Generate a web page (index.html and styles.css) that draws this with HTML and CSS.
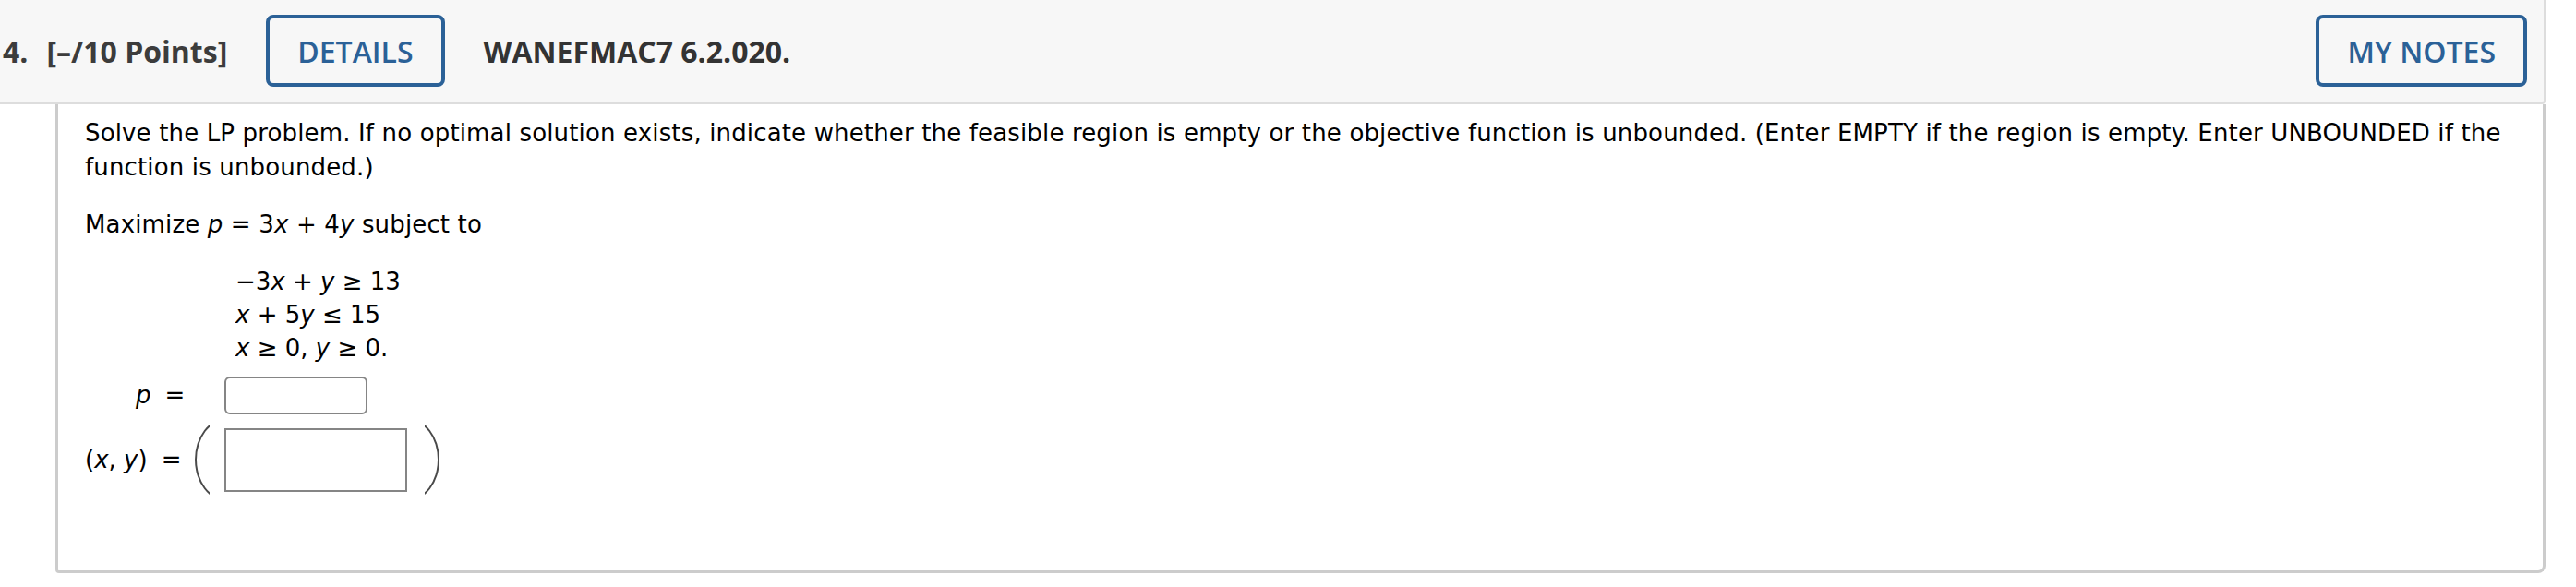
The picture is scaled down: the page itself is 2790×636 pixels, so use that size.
FILE: index.html
```html
<!DOCTYPE html>
<html>

<head>
	<meta charset="UTF-8">
	<link rel="stylesheet" href="styles.css">
</head>

<body>
	<div class="question">
		<!-- 题目头部 -->
		<div class="question-header">
			<span class="question-num">4.</span>
			<span class="question-points">[–/10 Points]</span>
			<button class="header-button">DETAILS</button>
			<span class="question-code">WANEFMAC7 6.2.020.</span>
			<button class="header-button notes-button">MY NOTES</button>
		</div>

		<!-- 题目内容 -->
		<div class="question-body">
			<p class="intro">Solve the LP problem. If no optimal solution exists, indicate whether the feasible region is empty or the objective function is unbounded. (Enter EMPTY if the region is empty. Enter UNBOUNDED if the function is unbounded.)</p>
			<p class="intro">Maximize <i>p</i> = 3<i>x</i> + 4<i>y</i> subject to</p>

			<div class="constraints">
				<div>−3<i>x</i> + <i>y</i> ≥ 13</div>
				<div><i>x</i> + 5<i>y</i> ≤ 15</div>
				<div><i>x</i> ≥ 0, <i>y</i> ≥ 0.</div>
			</div>

			<div class="answer-row">
				<div class="answer-label label-p"><i>p</i><span class="eq">=</span></div>
				<input type="text" class="answer-input input-p">
			</div>
			<div class="answer-row">
				<div class="answer-label">(<i>x</i>, <i>y</i>)<span class="eq">=</span></div>
				<div class="paren"></div>
				<input type="text" class="answer-input input-xy">
				<div class="paren paren-right"></div>
			</div>
		</div>
	</div>
</body>

</html>
```

FILE: styles.css
```css
		html,
		body {
			margin: 0;
			padding: 0;
			background: #ffffff;
		}

		.question {
			margin-right: 33px;
		}

		/* 头部 */
		.question-header {
			display: flex;
			align-items: center;
			height: 110px;
			padding: 0 18px 0 3px;
			background: #f7f7f7;
			border-right: 2px solid #dddddd;
			border-bottom: 3px solid #dddddd;
			border-bottom-right-radius: 4px;
			font-family: "Open Sans", "Liberation Sans", sans-serif;
			font-size: 32px;
		}

		.question-num,
		.question-points {
			font-weight: 700;
			color: #3c3c3c;
		}

		.question-points {
			margin-left: 20px;
		}

		.question-code {
			font-weight: 700;
			color: #333333;
			margin-left: 42px;
		}

		.header-button {
			box-sizing: border-box;
			height: 78px;
			margin-left: 42px;
			padding: 0 30px;
			background: transparent;
			border: 4px solid #2b6197;
			border-radius: 8px;
			color: #2b6197;
			font-family: "Open Sans", "Liberation Sans", sans-serif;
			font-size: 32px;
			font-weight: 600;
			cursor: pointer;
		}

		.notes-button {
			margin-left: auto;
		}

		/* 内容 */
		.question-body {
			margin-left: 60px;
			padding: 13px 14px 82px 29px;
			border: 3px solid #cccccc;
			border-top: none;
			border-radius: 0 0 8px 4px;
			font-family: "DejaVu Sans", Verdana, sans-serif;
			font-size: 26px;
			line-height: 37px;
			color: #000000;
		}

		.intro {
			margin: 0 0 25px;
			letter-spacing: 0.15px;
		}

		.constraints {
			margin-left: 163px;
			line-height: 36px;
		}

		.answer-row {
			display: flex;
			align-items: center;
		}

		.answer-row + .answer-row {
			margin-top: 11px;
		}

		.constraints + .answer-row {
			margin-top: 13px;
		}

		.answer-label {
			box-sizing: border-box;
			width: 108px;
		}

		.label-p {
			padding-left: 55px;
		}

		.eq {
			margin-left: 15px;
		}

		.answer-input {
			box-sizing: border-box;
			margin: 0;
			padding: 0 8px;
			border: 2px solid #858585;
			background: #ffffff;
			font-family: "DejaVu Sans", sans-serif;
			font-size: 26px;
		}

		.input-p {
			width: 155px;
			height: 41px;
			margin-left: 43px;
			border-radius: 6px;
		}

		.input-xy {
			width: 198px;
			height: 69px;
			margin: 0 19px 0 16px;
		}

		/* 括号 */
		.paren {
			position: relative;
			width: 16px;
			height: 76px;
			margin-left: 11px;
			overflow: hidden;
		}

		.paren::before {
			content: "";
			position: absolute;
			top: -7px;
			left: 0;
			width: 69px;
			height: 90px;
			box-sizing: border-box;
			border: 2px solid #4a4a4a;
			border-radius: 50%;
		}

		.paren-right {
			margin-left: 0;
			transform: scaleX(-1);
		}
```
